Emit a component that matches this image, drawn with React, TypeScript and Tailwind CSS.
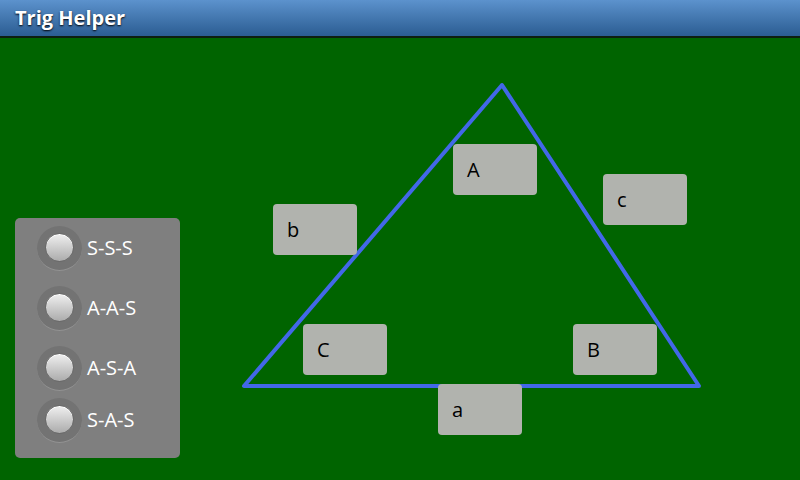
import React from 'react';

const boxes = [
  { label: 'A', cls: 'left-[453px] top-[106px]' },
  { label: 'c', cls: 'left-[603px] top-[136px]' },
  { label: 'b', cls: 'left-[273px] top-[166px]' },
  { label: 'C', cls: 'left-[303px] top-[286px]' },
  { label: 'B', cls: 'left-[573px] top-[286px]' },
  { label: 'a', cls: 'left-[438px] top-[346px]' },
];

const options = [
  { label: 'S-S-S', cls: 'mt-[8px]' },
  { label: 'A-A-S', cls: 'mt-[16px]' },
  { label: 'A-S-A', cls: 'mt-[16px]' },
  { label: 'S-A-S', cls: 'mt-[8px]' },
];

const Radio = ({ label, cls }: { label: string; cls: string }) => (
  <div className={`flex items-center h-[44px] ${cls}`}>
    <div className="w-[45px] h-[45px] rounded-full bg-[#737373] border-b border-[#939393] flex items-center justify-center">
      <div className="w-[29px] h-[29px] rounded-full bg-gradient-to-b from-[#f0f0f0] to-[#acacac] border border-[#686868] shadow-[inset_0_1px_0_#ffffff]" />
    </div>
    <span className="ml-[5px] text-[20px] text-white leading-none">{label}</span>
  </div>
);

export default function App() {
  return (
    <div className="w-[800px] h-[480px] bg-[#006400] flex flex-col overflow-hidden font-['Open_Sans','Noto_Sans',sans-serif]">
      {/* Title bar */}
      <div className="h-[38px] shrink-0 bg-gradient-to-b from-[#5c92cd] to-[#2b5d92] border-b-2 border-[#0d1f10] flex items-center pl-[15px]">
        <span className="text-white font-bold text-[20px] [text-shadow:0_1px_2px_#000]">Trig Helper</span>
      </div>

      <div className="relative flex-1">
        {/* Triangle */}
        <svg className="absolute inset-0" width="800" height="442" viewBox="0 38 800 442">
          <polygon
            points="502,85 244,386 699,386"
            fill="none"
            stroke="#4268e8"
            strokeWidth="4"
            strokeLinejoin="round"
          />
        </svg>

        {/* Side/angle inputs */}
        {boxes.map((b) => (
          <div
            key={b.label}
            className={`absolute ${b.cls} w-[84px] h-[51px] rounded-[4px] bg-[#b1b3ae] flex items-center pl-[14px] text-[20px] text-black`}
          >
            {b.label}
          </div>
        ))}

        {/* Solve type options */}
        <div className="relative ml-[15px] mt-[180px] w-[165px] h-[240px] rounded-[5px] bg-[#7f7f7f] flex flex-col pl-[22px]">
          {options.map((o) => (
            <Radio key={o.label} label={o.label} cls={o.cls} />
          ))}
        </div>
      </div>
    </div>
  );
}
